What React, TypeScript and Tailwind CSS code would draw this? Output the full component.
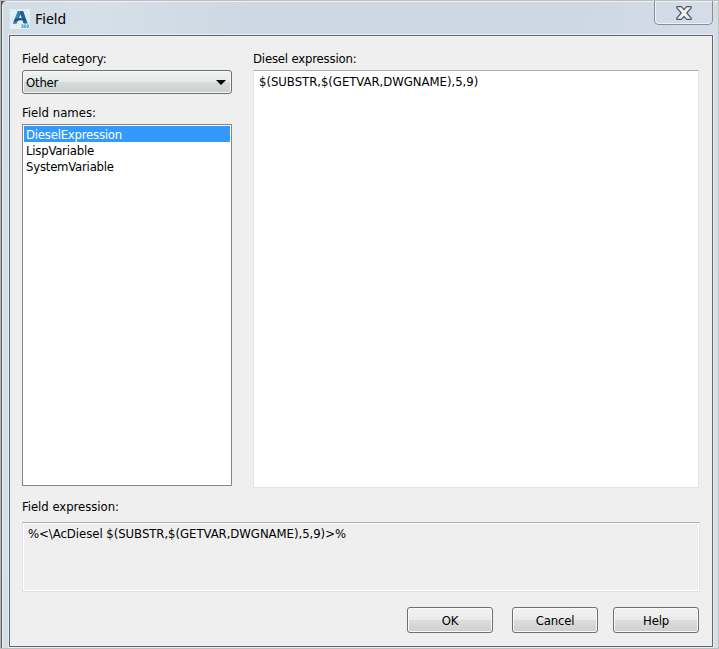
import { useState } from "react";

const fieldNames = ["DieselExpression", "LispVariable", "SystemVariable"];

function AppLogo() {
  return (
    <svg width="20" height="20" viewBox="0 0 20 20" className="shrink-0">
      <rect width="20" height="20" fill="#e3eef8" />
      <path d="M3 14.5 L8 2 H13.2 L17.6 14.5 H13.6 L10.5 5.5 L6.6 14.5 Z" fill="#24608f" />
      <path d="M8 2 H10.6 L6.6 14.5 H3 Z" fill="#3a84b0" />
      <path d="M5 9.8 Q10 8 15 9.8 L16 12.4 Q10 9.8 3.8 13.2 Z" fill="#1d5582" />
      <path d="M11.3 15.9 h1.8 v2.6 h-1.8 M11.6 17.2 h1.5 M16 15.9 h-1.6 v2.6 h1.4 v-1.3 h-1.4 M17 15.9 h1.5 v2.6 h-1.5 Z" stroke="#43a2d6" strokeWidth="0.9" fill="none" />
    </svg>
  );
}

function CloseIcon() {
  return (
    <svg width="16" height="14" viewBox="0 0 16 14">
      <path
        d="M0.8 0.7 H5.4 L8 3.6 L10.6 0.7 H15.2 V1.8 L10.8 7 L15.2 12.2 V13.3 H10.6 L8 10.4 L5.4 13.3 H0.8 V12.2 L5.2 7 L0.8 1.8 Z"
        fill="#f0f0f0"
        stroke="#535666"
        strokeWidth="1.2"
        strokeLinejoin="round"
      />
    </svg>
  );
}

function DialogButton({ label, className }: { label: string; className?: string }) {
  return (
    <button
      className={`h-[26px] w-[86px] rounded-[3px] border border-[#707070] bg-[linear-gradient(#f2f2f2_0%,#ebebeb_49%,#dddddd_51%,#cfcfcf_100%)] text-center leading-[25px] tracking-[-0.2px] shadow-[inset_0_0_0_1px_#fafafa] ${className ?? ""}`}
    >
      {label}
    </button>
  );
}

export default function App() {
  const [selected, setSelected] = useState("DieselExpression");

  return (
    <div className="flex h-[649px] w-[719px] border-x border-t border-b border-l-[#b8b8b8] border-r-[#c3c3c5] border-t-[#c2bebf] border-b-[#bdbdbf] bg-[#555a62] font-['DejaVu_Sans_Condensed','DejaVu_Sans',sans-serif] text-[13px] tracking-[-0.04px] text-black">
      <div className="ml-px flex flex-1 flex-col rounded-tl-[5px] border-l border-t border-[#eef1f6] bg-[linear-gradient(100deg,#d2dce5_0%,#d5dfe7_12%,#ced8e4_30%,#ced8e4_70%,#d6dee9_92%)]">
        {/* Title bar */}
        <div className="flex h-8 shrink-0 items-start pl-[7px]">
          <div className="flex flex-1 items-center pt-[6px]">
            <AppLogo />
            <span className="ml-[5px] pt-px font-['Noto_Sans',sans-serif] text-[14px] leading-5 tracking-normal">Field</span>
          </div>
          <button className="mr-[5px] -mt-px flex h-6 w-[59px] items-center justify-center rounded-b-[5px] border border-t-0 border-[#878e9a] shadow-[inset_0_-1px_0_#eef2f7,inset_1px_0_0_#eef2f7]">
            <CloseIcon />
          </button>
        </div>

        {/* Client area */}
        <div className="mr-1 ml-[5px] flex-1 border border-[#eaf0f5]">
          <div className="flex h-full flex-col border border-[#60656d] bg-[#efefef] pl-3">
            <div className="flex">
              <div className="w-[210px]">
                <div className="mt-[14px] h-5 leading-[18px]">Field category:</div>
                <button className="flex h-6 w-full items-center justify-between rounded-[3px] border border-[#707070] bg-[linear-gradient(#f1f3f3_0%,#e6e9e9_48%,#d6dada_52%,#cbd0d0_100%)] pr-[5px] pl-[3px] tracking-[-0.2px] shadow-[inset_0_0_0_1px_#f6f8f8]">
                  <span className="pt-[2px]">Other</span>
                  <svg width="10" height="5" viewBox="0 0 10 5">
                    <path d="M0 0 H10 L5 5 Z" fill="#000" />
                  </svg>
                </button>
                <div className="mt-[10px] h-5 leading-[18px] tracking-[0.02px]">Field names:</div>
                <ul className="h-[362px] border border-[#828790] bg-white p-px">
                  {fieldNames.map((name) => (
                    <li
                      key={name}
                      onClick={() => setSelected(name)}
                      className={`h-4 pl-[2px] leading-[17px] tracking-[-0.22px] ${selected === name ? "bg-[#3399ff] text-white" : ""}`}
                    >
                      {name}
                    </li>
                  ))}
                </ul>
              </div>
              <div className="ml-[21px] w-[446px]">
                <div className="mt-[14px] h-5 leading-[18px] tracking-[-0.18px]">Diesel expression:</div>
                <div className="h-[418px] border border-[#e2e3ea] border-t-[#abadb3] bg-white pt-[3px] pl-[5px] leading-4 tracking-[-0.03px]">
                  $(SUBSTR,$(GETVAR,DWGNAME),5,9)
                </div>
              </div>
            </div>

            <div className="mt-[10px] h-6 leading-[18px]">Field expression:</div>
            <div className="h-[70px] w-[678px] border border-[#e2e3ea] border-t-[#abadb3] pt-[3px] pl-[5px] leading-4 tracking-[-0.04px] shadow-[inset_0_0_0_1px_#ffffff]">
              %&lt;\AcDiesel $(SUBSTR,$(GETVAR,DWGNAME),5,9)&gt;%
            </div>

            <div className="mt-[15px] flex justify-end pr-[13px]">
              <DialogButton label="OK" />
              <DialogButton label="Cancel" className="ml-[19px]" />
              <DialogButton label="Help" className="ml-[15px]" />
            </div>
          </div>
        </div>
      </div>
    </div>
  );
}
